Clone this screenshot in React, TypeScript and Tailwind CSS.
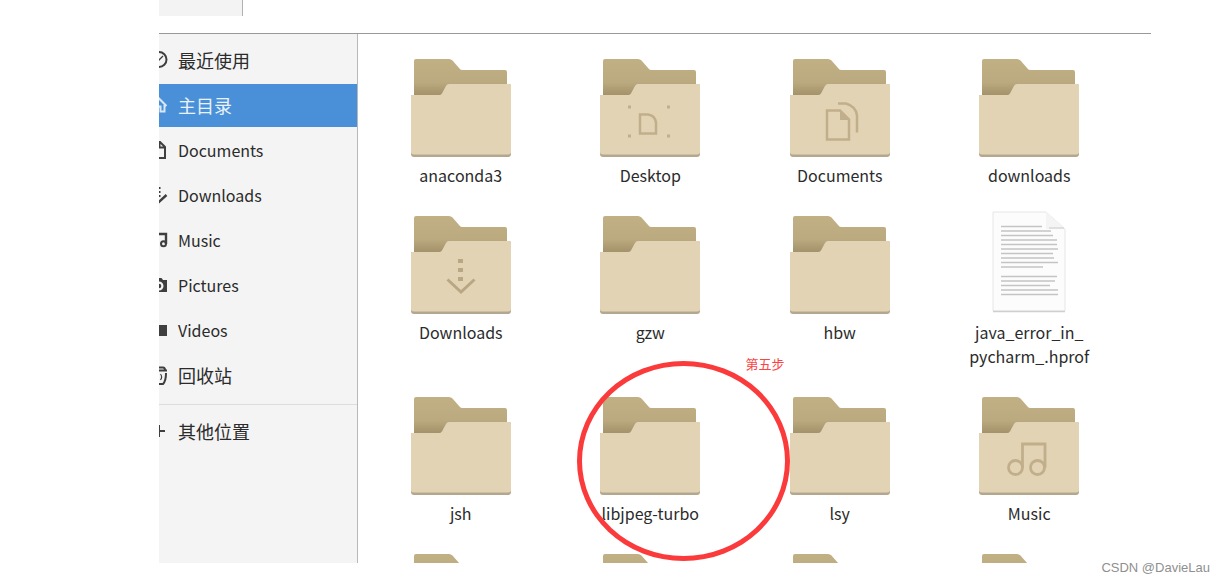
import type { ReactNode } from 'react';

type Glyph = 'desktop' | 'documents' | 'downloads' | 'music';

interface Entry {
  name?: string;
  kind?: 'folder' | 'file';
  glyph?: Glyph;
  marked?: boolean;
}

const entries: Entry[] = [
  { name: 'anaconda3' },
  { name: 'Desktop', glyph: 'desktop' },
  { name: 'Documents', glyph: 'documents' },
  { name: 'downloads' },
  { name: 'Downloads', glyph: 'downloads' },
  { name: 'gzw' },
  { name: 'hbw' },
  { name: 'java_error_in_ pycharm_.hprof', kind: 'file' },
  { name: 'jsh' },
  { name: 'libjpeg-turbo', marked: true },
  { name: 'lsy' },
  { name: 'Music', glyph: 'music' },
  {},
  {},
  {},
  {},
];

const places: { label: string; icon: ReactNode; active?: boolean }[] = [
  {
    label: '最近使用',
    icon: (
      <>
        <circle cx="8" cy="7.5" r="7.5" />
        <path d="M8 8l4-4M5 6l3 3" strokeWidth="1.3" />
      </>
    ),
  },
  {
    label: '主目录',
    active: true,
    icon: <path d="M0 8.500L7.500 1l8 8M2 8v6.500h4v-5h3.500v5h4V8" />,
  },
  { label: 'Documents', icon: <path d="M2 0h7l5 5v11H2zM8.500 0v5.500H14" /> },
  {
    label: 'Downloads',
    icon: (
      <>
        <path d="M0.500 8.500L8 15l7.500-7" strokeWidth="2.4" />
        <path d="M8.500 0v12" strokeDasharray="2 2" />
      </>
    ),
  },
  {
    label: 'Music',
    icon: (
      <>
        <path d="M5 12V2h10v10" strokeWidth="2.4" />
        <circle cx="3" cy="12" r="2.2" />
        <circle cx="12.500" cy="11.800" r="2.500" />
      </>
    ),
  },
  {
    label: 'Pictures',
    icon: (
      <>
        <path
          d="M1 3h3l1.500-2h5L12 3h4v12H0V3zM8 4.500a4.500 4.500 0 100 9 4.500 4.500 0 000-9z"
          fill="currentColor"
          fillRule="evenodd"
          stroke="none"
        />
        <circle cx="8" cy="9" r="2.300" fill="currentColor" stroke="none" />
      </>
    ),
  },
  { label: 'Videos', icon: <path d="M0 3h16v11H0z" fill="currentColor" stroke="none" /> },
  {
    label: '回收站',
    icon: (
      <>
        <path d="M0 3.500h16M4 3V0.500h8q2 0 2 2.500M1 6q0 8 3 11h8q3-3 3-11" />
        <path d="M6 7v6M9.500 7c1.500 2 1.500 4 0 6" strokeWidth="1.2" />
      </>
    ),
  },
];

function PlaceButton({ label, icon, active }: { label: string; icon: ReactNode; active?: boolean }) {
  const latin = /[a-z]/i.test(label);

  return (
    <button
      type="button"
      className={
        active
          ? 'flex h-[43px] w-full items-center gap-[11px] bg-[#4a90d9] pb-[2px] text-left text-[#e8f2f8]'
          : 'flex h-[43px] w-full items-center gap-[11px] pb-[2px] text-left text-[#2b2b2b]'
      }
    >
      <svg
        viewBox="0 0 16 16"
        className="-ml-2 size-4 shrink-0 overflow-visible opacity-90"
        fill="none"
        stroke="currentColor"
        strokeWidth="2"
        aria-hidden="true"
      >
        {icon}
      </svg>
      <span className={latin ? 'text-base leading-6' : 'text-lg leading-6'}>{label}</span>
    </button>
  );
}

function FolderGlyph({ glyph }: { glyph: Glyph }) {
  if (glyph === 'desktop') {
    return (
      <g fill="none" stroke="#c1ae8a" strokeWidth="2.5">
        <path d="M40 55.500h8q7 1 8 8v11H40z" />
        <path d="M28 48h3M67 48h3M28 77h3M67 77h3" strokeWidth="3" />
      </g>
    );
  }
  if (glyph === 'documents') {
    return (
      <g fill="none" stroke="#c1ae8a" strokeWidth="2.5">
        <path d="M37 51.500h13l9 9v20H37z" />
        <path d="M50 51l10 10H50z" fill="#c1ae8a" stroke="none" />
        <path d="M48 44.500h8q10 3 11 12v17" />
      </g>
    );
  }
  if (glyph === 'downloads') {
    return (
      <g fill="none" stroke="#b9a683" strokeWidth="3">
        <path d="M36.500 63.500L50 76l13.500-12.500" />
        <path d="M49.500 43v22" strokeWidth="5" strokeDasharray="4 5" />
      </g>
    );
  }
  return (
    <g fill="none" stroke="#c1ae8a" strokeWidth="2.8">
      <circle cx="36.500" cy="70.500" r="7" />
      <circle cx="58.500" cy="70.500" r="7" />
      <path d="M43.500 70.500V47H66v23.500" />
    </g>
  );
}

function FolderIcon({ glyph }: { glyph?: Glyph }) {
  return (
    <svg viewBox="0 0 100 98" className="h-[98px] w-[100px] shrink-0" aria-hidden="true">
      <defs>
        <linearGradient id="folder-back" x1="0" y1="0" x2="0" y2="1">
          <stop offset="0" stopColor="#c2b085" />
          <stop offset="0.65" stopColor="#bba97f" />
          <stop offset="1" stopColor="#a3926a" />
        </linearGradient>
      </defs>
      <path d="M3 2q0-2 2-2h33q2 0 3.500 1.500l7 8q1 1.500 3 1.500H94q2 0 2 2v13H36v10H3z" fill="url(#folder-back)" />
      <path d="M0 37q0-1 1-1h27q2 0 3-1.500l4-7.500q1-2 3-2h60q2 0 2 2v68q0 3-3 3H3q-3 0-3-3z" fill="#b3a88f" />
      <path d="M0 37q0-1 1-1h27q2 0 3-1.500l4-7.500q1-2 3-2h60q2 0 2 2v66q0 2.500-3 2.500H3q-3 0-3-2.500z" fill="#e3d3b5" />
      {glyph && <FolderGlyph glyph={glyph} />}
    </svg>
  );
}

// right ends of the printed lines on the sheet
const upperLines = [63, 72, 74, 78, 78, 79, 74, 75, 79, 64];
const lowerLines = [78, 76, 71, 79, 79];

function FileIcon() {
  return (
    <svg viewBox="0 0 100 98" className="h-[98px] w-[100px] shrink-0 overflow-visible" aria-hidden="true">
      <path d="M14-4h53l19 17v82H14z" fill="#fcfcfc" stroke="#e6e6e6" />
      <path d="M14 95.500h72" stroke="#cfcfcf" strokeWidth="1.5" />
      <path d="M67-4v17h19z" fill="#f4f4f4" />
      <path d="M70 12h15" stroke="#d9d9d9" strokeWidth="1.5" />
      <g stroke="#c4c4c4" strokeWidth="1.5">
        {upperLines.map((end, i) => (
          <path key={i} d={`M22 ${10.5 + i * 4.5}H${end}`} />
        ))}
        {lowerLines.map((end, i) => (
          <path key={i} d={`M22 ${60.5 + i * 4.5}H${end}`} />
        ))}
      </g>
    </svg>
  );
}

function StepMark() {
  return (
    <>
      <div className="absolute -top-9 left-[21px] h-[200px] w-[213px] rounded-[50%] border-5 border-[#fb3b3b]" />
      <span className="absolute -top-[42px] left-[190px] text-[13px] leading-[18px] whitespace-nowrap text-[#fb4545]">
        第五步
      </span>
    </>
  );
}

export default function App() {
  return (
    <div className="flex h-screen flex-col overflow-hidden bg-white font-['Noto_Sans_CJK_SC',sans-serif] text-base leading-6 text-[#2b2b2b]">
      <div className="flex min-h-0 flex-1 flex-col pr-[73px] pl-[159px]">
        <div className="mb-[17px] h-4 w-[84px] shrink-0 border-r border-[#b0b0b0] bg-[#f3f3f3]" />

        <div className="flex min-h-0 flex-1 overflow-hidden border-t border-[#999999]">
          <nav className="w-[199px] shrink-0 overflow-hidden border-r border-[#b8b8b8] bg-[#f4f4f4] pt-[5px]">
            <ul className="flex flex-col gap-[2px]">
              {places.map((place) => (
                <li key={place.label}>
                  <PlaceButton {...place} />
                </li>
              ))}
            </ul>
            <div className="mt-[7px] border-t border-[#dcdcdc] pt-[5px]">
              <PlaceButton label="其他位置" icon={<path d="M1 8h13M8 2v12" strokeWidth="2" />} />
            </div>
          </nav>

          <ul className="grid flex-1 grid-cols-4 content-start gap-y-[29px] pt-[25px] pr-[27px] pl-2">
            {entries.map((entry, i) => (
              <li key={i} className="relative flex flex-col items-center gap-[6px]">
                {entry.kind === 'file' ? <FileIcon /> : <FolderIcon glyph={entry.glyph} />}
                {entry.name && <span className="max-w-32 text-center">{entry.name}</span>}
                {entry.marked && <StepMark />}
              </li>
            ))}
          </ul>
        </div>
      </div>

      <footer className="h-5 shrink-0 pr-[14px] text-right font-['Liberation_Sans',sans-serif] text-[13px] leading-[10px] text-[#8f8f8f]">
        CSDN @DavieLau
      </footer>
    </div>
  );
}
